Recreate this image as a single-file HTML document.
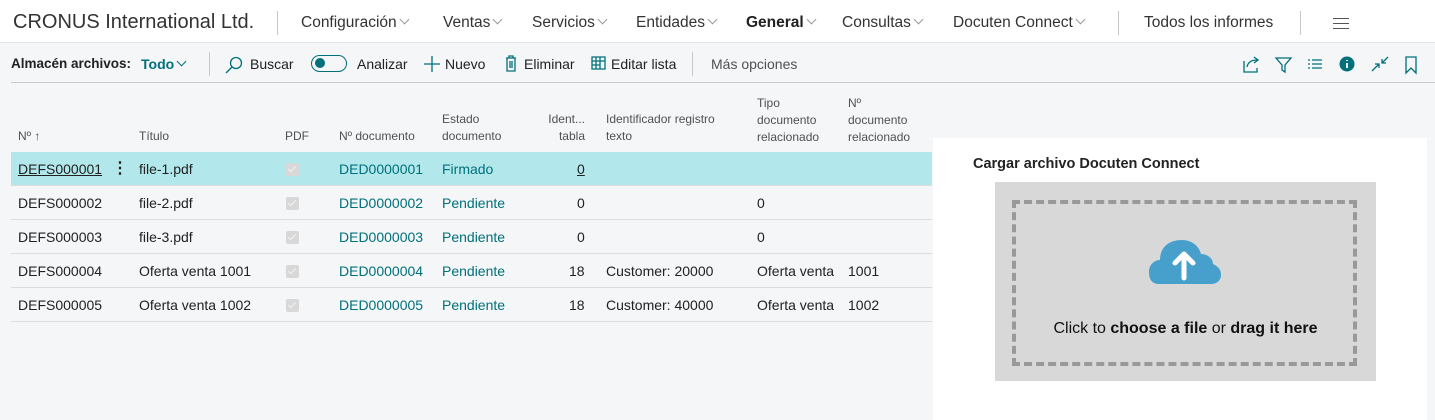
<!DOCTYPE html>
<html><head><meta charset="utf-8"><style>
*{margin:0;padding:0;box-sizing:border-box}
body{width:1435px;height:420px;overflow:hidden;background:#f5f6f8;font-family:"Liberation Sans",sans-serif;color:#212121;position:relative}
.a{position:absolute;white-space:nowrap}
.top{position:absolute;left:0;top:0;width:1435px;height:43px;background:#fff;border-bottom:1px solid #e1e3e6}
.nav{font-size:15.5px;color:#333;top:14px}
.chev{display:inline-block;width:7px;height:7px;border-right:1px solid #999;border-bottom:1px solid #999;transform:rotate(45deg);margin-left:4px;position:relative;top:-4px}
.tb{font-size:14px;top:56px;color:#212121}
.hd{font-size:12px;color:#505050;line-height:17px}
.row{position:absolute;left:11px;width:921px;height:34px;border-bottom:1px solid #dcdcdc;font-size:14px}
.row span{position:absolute;top:9px;white-space:nowrap}
.tl{color:#00707a}
.cb{position:absolute;top:11px;left:275px;width:13px;height:13px;background:#d8d8d8;border-radius:2px}
.cb:after{content:"";position:absolute;left:4px;top:1px;width:3px;height:7px;border-right:1.5px solid #f3f3f3;border-bottom:1.5px solid #f3f3f3;transform:rotate(45deg)}
.ic{stroke:#00707a;fill:none;stroke-width:1.3}
</style></head><body>
<div class="top"></div>
<div class="a" style="left:13px;top:11px;font-size:20px;color:#333">CRONUS International Ltd.</div>
<div class="a" style="left:277px;top:11px;width:1px;height:24px;background:#c8c8c8"></div>
<div class="a nav" style="left:301px">Configuración<i class="chev"></i></div>
<div class="a nav" style="left:443px">Ventas<i class="chev"></i></div>
<div class="a nav" style="left:532px">Servicios<i class="chev"></i></div>
<div class="a nav" style="left:636px">Entidades<i class="chev"></i></div>
<div class="a nav" style="left:746px;font-weight:bold;color:#212121">General<i class="chev"></i></div>
<div class="a nav" style="left:842px">Consultas<i class="chev"></i></div>
<div class="a nav" style="left:953px">Docuten Connect<i class="chev"></i></div>
<div class="a" style="left:1118px;top:11px;width:1px;height:24px;background:#c8c8c8"></div>
<div class="a nav" style="left:1144px">Todos los informes</div>
<div class="a" style="left:1300px;top:11px;width:1px;height:24px;background:#c8c8c8"></div>
<div class="a" style="left:1333px;top:18px;width:16px;height:1px;background:#555;box-shadow:0 5px 0 #555,0 10px 0 #555"></div>

<div class="a tb" style="left:11px;font-weight:bold;font-size:13.5px">Almacén archivos:</div>
<div class="a tb" style="left:141px;color:#00707a;font-weight:bold">Todo<i class="chev" style="border-color:#00707a"></i></div>
<div class="a" style="left:209px;top:52px;width:1px;height:24px;background:#c8c8c8"></div>
<svg class="a" style="left:224px;top:55px" width="20" height="20"><circle class="ic" cx="12" cy="8" r="5.5"/><path class="ic" d="M8 12 L2 18"/></svg>
<div class="a tb" style="left:250px">Buscar</div>
<div class="a" style="left:311px;top:55px;width:36px;height:17px;border:1.5px solid #00707a;border-radius:9px"><div style="position:absolute;left:3px;top:2px;width:10px;height:10px;border-radius:50%;background:#00707a"></div></div>
<div class="a tb" style="left:357px">Analizar</div>
<svg class="a" style="left:424px;top:56px" width="16" height="16"><path class="ic" d="M8 0V16M0 8H16"/></svg>
<div class="a tb" style="left:445px">Nuevo</div>
<svg class="a" style="left:505px;top:55px" width="12" height="17"><path class="ic" d="M1 3H11M4 3V1H8V3M2 3V16H10V3M5 6V13M7 6V13"/></svg>
<div class="a tb" style="left:524px">Eliminar</div>
<svg class="a" style="left:591px;top:56px" width="16" height="15"><path class="ic" d="M1 1H14V13H1ZM1 5H14M1 9H9M5 1V13M9 1V13"/></svg>
<div class="a tb" style="left:611px">Editar lista</div>
<div class="a" style="left:692px;top:52px;width:1px;height:24px;background:#c8c8c8"></div>
<div class="a tb" style="left:711px;color:#505050">Más opciones</div>
<svg class="a" style="left:1242px;top:55px" width="180" height="20">
<path class="ic" d="M2 6V17H15V13M5 12C6 7 10 5 15 5M12 2L16 5L12 8"/>
<path class="ic" d="M34 3H49L43 10V17L40 15V10Z"/>
<path class="ic" d="M66 5H68M66 9H68M66 13H68M70 5H80M70 9H80M70 13H80"/>
<circle cx="105" cy="9" r="7.5" fill="#00707a"/><path d="M105 8V13M105 5V6" stroke="#fff" stroke-width="1.8"/>
<path class="ic" d="M130 16L137 9M133 9H137V13M146 2L140 8M140 4V8H144"/>
<path class="ic" d="M164 2H174V18L169 13L164 18Z"/>
</svg>
<div class="a" style="left:11px;top:82px;width:1424px;height:1px;background:#c8cacc"></div>

<div class="a hd" style="left:18px;top:128px">Nº ↑</div>
<div class="a hd" style="left:139px;top:128px">Título</div>
<div class="a hd" style="left:285px;top:128px">PDF</div>
<div class="a hd" style="left:339px;top:128px">Nº documento</div>
<div class="a hd" style="left:442px;top:111px">Estado<br>documento</div>
<div class="a hd" style="left:540px;top:111px;width:45px;text-align:right">Ident...<br>tabla</div>
<div class="a hd" style="left:606px;top:111px">Identificador registro<br>texto</div>
<div class="a hd" style="left:757px;top:95px">Tipo<br>documento<br>relacionado</div>
<div class="a hd" style="left:848px;top:95px">Nº<br>documento<br>relacionado</div>

<div class="row" style="top:152px;background:#b2e8ec"><span style="left:7px;text-decoration:underline">DEFS000001</span><span style="left:101px;top:6px;font-weight:bold;font-size:16px">⋮</span><span style="left:128px">file-1.pdf</span><i class="cb"></i><span style="left:328px" class="tl">DED0000001</span><span style="left:431px" class="tl">Firmado</span><span style="left:566px;text-decoration:underline">0</span></div>
<div class="row" style="top:186px"><span style="left:7px">DEFS000002</span><span style="left:128px">file-2.pdf</span><i class="cb"></i><span style="left:328px" class="tl">DED0000002</span><span style="left:431px" class="tl">Pendiente</span><span style="left:566px">0</span><span style="left:746px">0</span></div>
<div class="row" style="top:220px"><span style="left:7px">DEFS000003</span><span style="left:128px">file-3.pdf</span><i class="cb"></i><span style="left:328px" class="tl">DED0000003</span><span style="left:431px" class="tl">Pendiente</span><span style="left:566px">0</span><span style="left:746px">0</span></div>
<div class="row" style="top:254px"><span style="left:7px">DEFS000004</span><span style="left:128px">Oferta venta 1001</span><i class="cb"></i><span style="left:328px" class="tl">DED0000004</span><span style="left:431px" class="tl">Pendiente</span><span style="left:558px">18</span><span style="left:595px">Customer: 20000</span><span style="left:746px">Oferta venta</span><span style="left:837px">1001</span></div>
<div class="row" style="top:288px"><span style="left:7px">DEFS000005</span><span style="left:128px">Oferta venta 1002</span><i class="cb"></i><span style="left:328px" class="tl">DED0000005</span><span style="left:431px" class="tl">Pendiente</span><span style="left:558px">18</span><span style="left:595px">Customer: 40000</span><span style="left:746px">Oferta venta</span><span style="left:837px">1002</span></div>

<div class="a" style="left:933px;top:138px;width:494px;height:282px;background:#fff"></div>
<div class="a" style="left:973px;top:156px;font-size:14.5px;font-weight:bold;color:#222">Cargar archivo Docuten Connect</div>
<div class="a" style="left:995px;top:182px;width:381px;height:199px;background:#d8d8d8">
<div style="position:absolute;left:17px;top:18px;width:345px;height:166px;border:4px dashed #999"></div>
<svg style="position:absolute;left:154px;top:50px" width="72" height="60"><path d="M10 52C2 52 0 46 0 40C0 33 5 28 11 28C11 16 19 8 33 8C43 8 50 14 52 22C58 22 64 26 64 32C70 35 72 38 72 43C72 49 67 52 62 52Z" fill="#47a0cc"/><path d="M35 46V22M26 31L35 22L44 31" stroke="#fff" stroke-width="5" fill="none" stroke-linecap="round" stroke-linejoin="round"/></svg>
<div style="position:absolute;left:0;width:381px;top:138px;text-align:center;font-size:16px;color:#111">Click to <b>choose a file</b> or <b>drag it here</b></div>
</div>
</body></html>
